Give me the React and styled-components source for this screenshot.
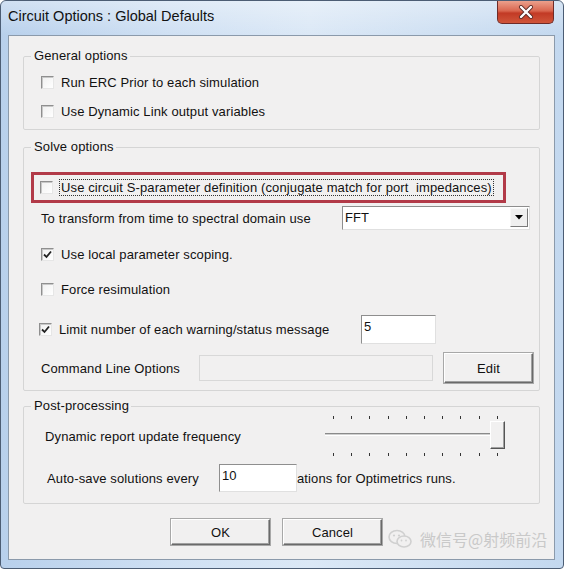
import React from 'react';
import styled, { createGlobalStyle } from 'styled-components';

const GlobalStyle = createGlobalStyle`
    html, body {
        margin: 0;
        padding: 0;
        background: #ffffff;
    }
    body {
        font-family: "Liberation Sans", Arial, sans-serif;
        font-size: 13px;
        letter-spacing: 0.12px;
        color: #111;
    }
`

const Window = styled.div`
    width: 564px;
    height: 569px;
    box-sizing: border-box;
    border: 1px solid #4c5d74;
    border-radius: 6px 6px 4px 4px;
    background: linear-gradient(90deg, #b8d0ec 0%, #cfe0f3 30%, #dbe8f6 55%, #c3d8ef 100%);
    display: flex;
    flex-direction: column;
    overflow: hidden;
`

const TitleBar = styled.div`
    height: 34px;
    display: flex;
    align-items: flex-start;
    justify-content: space-between;
    background: linear-gradient(180deg, rgba(255,255,255,0.35) 0%, rgba(255,255,255,0) 100%);
`

const Title = styled.div`
    font-family: "Liberation Sans", Arial, sans-serif;
    font-size: 14.5px;
    letter-spacing: 0;
    color: #111;
    padding: 7px 0 0 7px;
`

const CloseButton = styled.div`
    width: 55px;
    height: 22px;
    margin-right: 9px;
    border: 1px solid #6e2b28;
    border-top: none;
    border-radius: 0 0 5px 5px;
    background: linear-gradient(180deg, #eba08c 0%, #d9664f 45%, #c23a25 55%, #d0553a 100%);
    display: flex;
    align-items: center;
    justify-content: center;
`

const Client = styled.div`
    margin: 0 8px 0 7px;
    height: 525px;
    box-sizing: border-box;
    border: 1px solid #8b9aab;
    background: #f1f0f0;
    display: flex;
    flex-direction: column;
    padding: 12px 14px 0 14px;
`

const Group = styled.fieldset`
    margin: 0 0 ${p => p.gap || 0}px 0;
    padding: 0;
    border: 1px solid #d5d5d5;
    border-radius: 2px;
    box-sizing: border-box;
    height: ${p => p.height}px;
    min-width: 0;
`

const Legend = styled.legend`
    margin-left: 7px;
    padding: 0 2px 0 3px;
    font-size: 13px;
    line-height: 16px;
`

const Rows = styled.div`
    display: flex;
    flex-direction: column;
    padding: ${p => p.pad || '0'};
`

const Row = styled.div`
    display: flex;
    align-items: center;
    height: ${p => p.h || 22}px;
    margin-top: ${p => p.mt || 0}px;
    padding-left: ${p => p.pl || 0}px;
`

const Box = styled.div`
    width: 13px;
    height: 13px;
    box-sizing: border-box;
    border: 1px solid;
    border-color: #8f8f8f #e6e6e6 #e6e6e6 #8f8f8f;
    background: linear-gradient(135deg, #f0f0f0 0%, #ffffff 100%);
    box-shadow: inset 1px 1px 0 #c8c8c8;
    margin-right: 7px;
    flex-shrink: 0;
    display: flex;
    align-items: center;
    justify-content: center;
`

const Label = styled.span`
    white-space: pre;
    width: ${p => p.w ? `${p.w}px` : 'auto'};
    flex-shrink: 0;
`

const FocusLabel = styled.span`
    white-space: pre;
    outline: 1px dotted #333;
    padding: 0 1px;
    line-height: 15px;
`

const Highlight = styled.div`
    border: 3px solid #b23a48;
    height: 31px;
    box-sizing: border-box;
    margin: 17px 0 0 7px;
    width: 475px;
    display: flex;
    align-items: center;
    padding-left: 6px;
`

const Field = styled.div`
    box-sizing: border-box;
    width: ${p => p.w}px;
    height: ${p => p.h}px;
    margin-left: ${p => p.ml || 0}px;
    background: ${p => p.disabled ? '#f1f0f0' : '#ffffff'};
    border: 1px solid;
    border-color: ${p => p.disabled ? '#d8d8d8' : '#8e8e8e #e0e0e0 #e0e0e0 #8e8e8e'};
    font-size: 13px;
    padding: 3px 0 0 2px;
    display: flex;
    align-items: flex-start;
    justify-content: space-between;
    flex-shrink: 0;
`

const SelectArrow = styled.div`
    width: 18px;
    height: 19px;
    margin: -2px 1px 0 0;
    box-sizing: border-box;
    border: 1px solid;
    border-color: #f8f8f8 #7a7a7a #7a7a7a #f8f8f8;
    background: #efefef;
    display: flex;
    align-items: center;
    justify-content: center;
`

const Button = styled.div`
    box-sizing: border-box;
    width: ${p => p.w}px;
    height: ${p => p.h}px;
    margin-left: ${p => p.ml || 0}px;
    border: 1px solid;
    border-color: #ffffff #6a6a6a #6a6a6a #ffffff;
    box-shadow: inset -1px -1px 0 #a0a0a0, 0 0 0 1px #a8a8a8;
    background: #f1f0f0;
    display: flex;
    align-items: center;
    justify-content: center;
    font-size: 13px;
    flex-shrink: 0;
`

const Slider = styled.div`
    width: 182px;
    height: 40px;
    margin-left: ${p => p.ml}px;
    position: relative;
    flex-shrink: 0;
`

const Ticks = styled.div`
    position: absolute;
    left: 8px;
    top: ${p => p.top}px;
    display: flex;
    gap: 17.2px;
`

const Tick = styled.div`
    width: 1px;
    height: 3px;
    background: #333;
`

const Track = styled.div`
    position: absolute;
    left: 0;
    top: 17px;
    width: 166px;
    height: 3px;
    box-sizing: border-box;
    border-top: 1px solid #8a8a8a;
    border-bottom: 1px solid #ffffff;
    background: #cfcfcf;
`

const Thumb = styled.div`
    position: absolute;
    left: 165px;
    top: 5px;
    width: 15px;
    height: 28px;
    box-sizing: border-box;
    border: 1px solid;
    border-color: #ffffff #555 #555 #ffffff;
    box-shadow: inset -1px -1px 0 #a0a0a0;
    background: #f1f0f0;
`

const Footer = styled.div`
    display: flex;
    align-items: center;
    height: 26px;
    margin-top: 15px;
    padding-left: 148px;
`

const Watermark = styled.div`
    display: flex;
    align-items: center;
    margin-left: 6px;
    margin-top: 14px;
    color: #c9c9c9;
    font-family: "Noto Sans CJK SC", "Liberation Sans", sans-serif;
    font-size: 16px;
    letter-spacing: 0;
    white-space: nowrap;
    gap: 8px;
`

const Check = () => (
    <svg width="9" height="9" viewBox="0 0 9 9">
        <path d="M1 4.5 L3.5 7 L8 1.5" fill="none" stroke="#222" strokeWidth="1.8" />
    </svg>
)

const CheckBox = ({ checked }) => <Box>{checked && <Check />}</Box>

const WeChat = () => (
    <svg width="24" height="20" viewBox="0 0 24 20">
        <ellipse cx="9" cy="8" rx="8" ry="6.5" fill="none" stroke="#d0d0d0" strokeWidth="1.6" />
        <ellipse cx="16" cy="12.5" rx="7" ry="5.5" fill="#f1f0f0" stroke="#d0d0d0" strokeWidth="1.6" />
        <circle cx="6" cy="6.5" r="1.1" fill="#d0d0d0" />
        <circle cx="11" cy="6.5" r="1.1" fill="#d0d0d0" />
        <circle cx="13.5" cy="11.5" r="0.9" fill="#d0d0d0" />
        <circle cx="18" cy="11.5" r="0.9" fill="#d0d0d0" />
    </svg>
)

const CloseX = () => (
    <svg width="16" height="14" viewBox="0 0 16 14">
        <path d="M3 2 L13 12 M13 2 L3 12" stroke="#5a2a26" strokeWidth="4" strokeLinecap="round" />
        <path d="M3 2 L13 12 M13 2 L3 12" stroke="#ffffff" strokeWidth="2.4" strokeLinecap="round" />
    </svg>
)

const ArrowDown = () => (
    <svg width="8" height="5" viewBox="0 0 8 5">
        <path d="M0 0 L8 0 L4 4.5 Z" fill="#000" />
    </svg>
)

const tickList = Array.from({ length: 10 })

export default function App() {
    return (
        <>
            <GlobalStyle />
            <Window>
                <TitleBar>
                    <Title>Circuit Options : Global Defaults</Title>
                    <CloseButton><CloseX /></CloseButton>
                </TitleBar>
                <Client>
                    <Group height={82} gap={9}>
                        <Legend>General options</Legend>
                        <Rows pad="7px 0 0 17px">
                            <Row><CheckBox /><Label>Run ERC Prior to each simulation</Label></Row>
                            <Row mt={7}><CheckBox /><Label>Use Dynamic Link output variables</Label></Row>
                        </Rows>
                    </Group>

                    <Group height={252} gap={7}>
                        <Legend>Solve options</Legend>
                        <Rows>
                            <Highlight>
                                <CheckBox />
                                <FocusLabel>Use circuit S-parameter definition (conjugate match for port  impedances)</FocusLabel>
                            </Highlight>
                            <Row h={24} mt={3} pl={17}>
                                <Label w={301}>To transform from time to spectral domain use</Label>
                                <Field w={188} h={24}>
                                    <span>FFT</span>
                                    <SelectArrow><ArrowDown /></SelectArrow>
                                </Field>
                            </Row>
                            <Row mt={13} pl={17}><CheckBox checked /><Label>Use local parameter scoping.</Label></Row>
                            <Row mt={13} pl={17}><CheckBox /><Label>Force resimulation</Label></Row>
                            <Row h={29} mt={15} pl={15}>
                                <CheckBox checked />
                                <Label w={302}>Limit number of each warning/status message</Label>
                                <Field w={75} h={29}>5</Field>
                            </Row>
                            <Row h={30} mt={9} pl={17}>
                                <Label w={158}>Command Line Options</Label>
                                <Field w={234} h={26} disabled />
                                <Button w={89} h={30} ml={11}>Edit</Button>
                            </Row>
                        </Rows>
                    </Group>

                    <Group height={106}>
                        <Legend>Post-processing</Legend>
                        <Rows>
                            <Row h={40} mt={2} pl={21}>
                                <Label w={221}>Dynamic report update frequency</Label>
                                <Slider ml={59}>
                                    <Ticks top={0}>{tickList.map((_, i) => <Tick key={i} />)}</Ticks>
                                    <Track />
                                    <Thumb />
                                    <Ticks top={37}>{tickList.map((_, i) => <Tick key={i} />)}</Ticks>
                                </Slider>
                            </Row>
                            <Row h={28} mt={8} pl={23}>
                                <Label w={172}>Auto-save solutions every</Label>
                                <Field w={78} h={28}>10</Field>
                                <Label>ations for Optimetrics runs.</Label>
                            </Row>
                        </Rows>
                    </Group>

                    <Footer>
                        <Button w={99} h={26}>OK</Button>
                        <Button w={99} h={26} ml={13}>Cancel</Button>
                        <Watermark><WeChat />微信号@射频前沿</Watermark>
                    </Footer>
                </Client>
            </Window>
        </>
    );
}
